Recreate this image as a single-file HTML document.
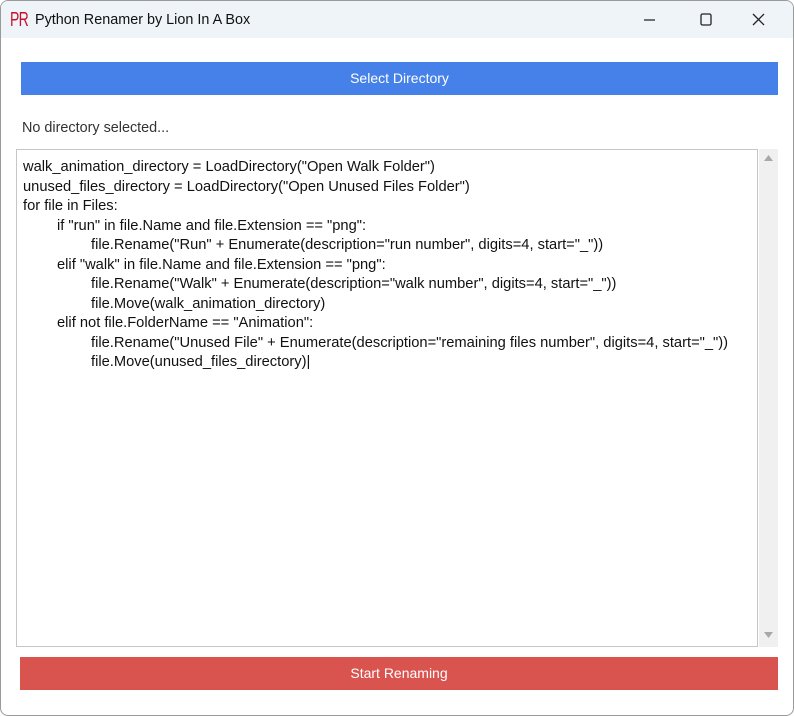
<!DOCTYPE html><html><head><style>
body{margin:0;width:794px;height:716px;background:#fff;overflow:hidden;font-family:"Liberation Sans",sans-serif;position:relative}
.win{position:absolute;left:0;top:0;width:792px;height:714px;border:1px solid #9a9a9a;border-radius:8px;overflow:hidden;background:#fff}
.tb{position:absolute;left:0;top:0;width:792px;height:37px;background:#eef4f8}
.t{position:absolute;left:34px;top:11px;font-size:14.4px;color:#111}
.ic{position:absolute;left:9px;top:8px;font-size:20px;color:#c8102e;letter-spacing:-1px;transform:scaleX(.7);transform-origin:left}
.btn{position:absolute;color:#fff;font-size:14px;text-align:center;line-height:33px}
.ta{position:absolute;box-sizing:border-box;left:15px;top:148px;width:742px;height:498px;border:1px solid #c6c6c6;padding-top:8px;font-size:14.7px;line-height:19.5px;color:#111;white-space:pre;overflow:hidden}
.ta div{padding-left:6px}.i1{margin-left:34px}.i2{margin-left:68px}
.sb{position:absolute;left:758px;top:148px;width:19px;height:498px;background:#f0f0f0}
</style></head><body><div class="win">
<div class="tb"><span class="ic">PR</span><span class="t">Python Renamer by Lion In A Box</span>
<svg style="position:absolute;left:640px;top:10px" width="140" height="18" stroke="#222" stroke-width="1.3" fill="none"><line x1="3" y1="9" x2="14" y2="9"/><rect x="60" y="3" width="10" height="11" rx="1.5"/><path d="M112 3l11 11M123 3l-11 11"/></svg></div>
<div class="btn" style="left:20px;top:61px;width:757px;height:33px;background:#4581e8">Select Directory</div>
<div style="position:absolute;left:21px;top:119px;font-size:14.4px;color:#333">No directory selected...</div>
<div class="ta"><div>walk_animation_directory = LoadDirectory("Open Walk Folder")</div><div>unused_files_directory = LoadDirectory("Open Unused Files Folder")</div><div>for file in Files:</div><div><span class="i1"></span>if "run" in file.Name and file.Extension == "png":</div><div><span class="i2"></span>file.Rename("Run" + Enumerate(description="run number", digits=4, start="_"))</div><div><span class="i1"></span>elif "walk" in file.Name and file.Extension == "png":</div><div><span class="i2"></span>file.Rename("Walk" + Enumerate(description="walk number", digits=4, start="_"))</div><div><span class="i2"></span>file.Move(walk_animation_directory)</div><div><span class="i1"></span>elif not file.FolderName == "Animation":</div><div><span class="i2"></span>file.Rename("Unused File" + Enumerate(description="remaining files number", digits=4, start="_"))</div><div><span class="i2"></span>file.Move(unused_files_directory)|</div></div>
<div class="sb"><svg width="19" height="498"><path d="M5 12l4.5-6 4.5 6z" fill="#a8a8a8"/><path d="M5 483l4.5 6 4.5-6z" fill="#a8a8a8"/></svg></div>
<div class="btn" style="left:19px;top:656px;width:758px;height:33px;background:#d9534f">Start Renaming</div>
</div></body></html>
